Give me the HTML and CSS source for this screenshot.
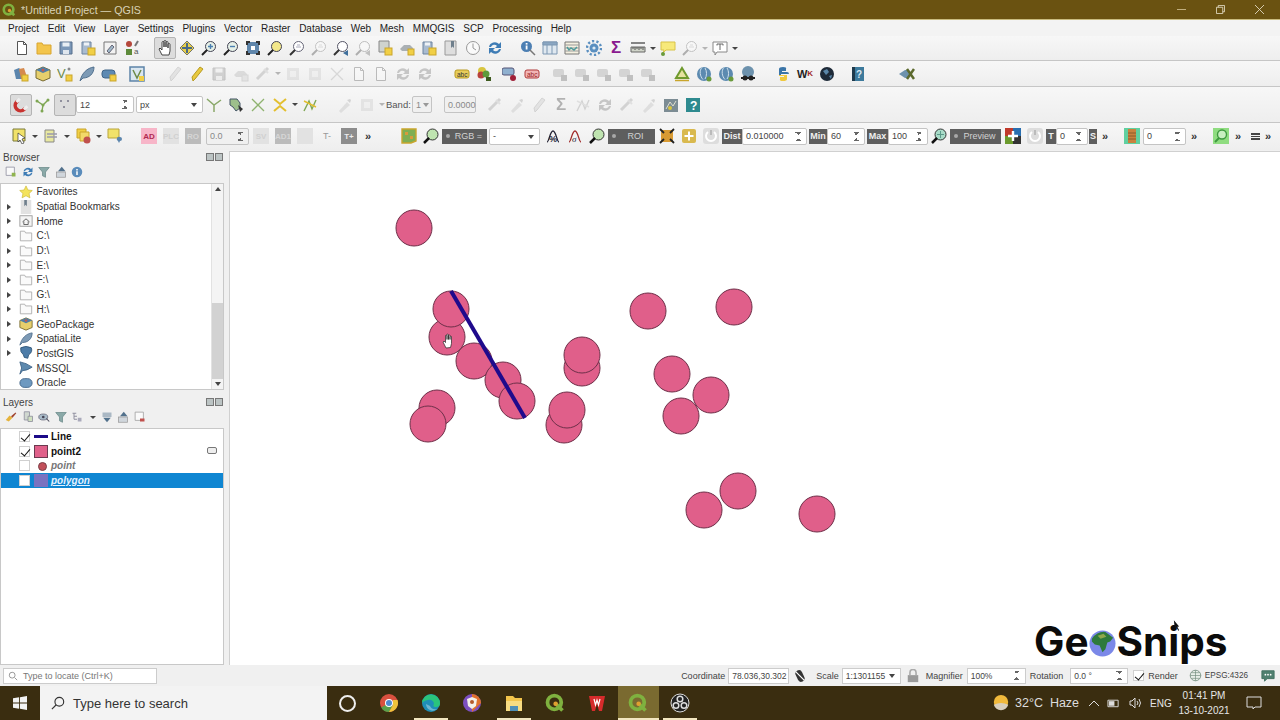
FILE: index.html
```html
<!DOCTYPE html>
<html lang="en">
<head>
    <meta charset="UTF-8">
    <title>*Untitled Project — QGIS</title>
    <link rel="stylesheet" href="styles.css">
</head>
<body>
    <svg class="defs" xmlns="http://www.w3.org/2000/svg">
        <symbol id="qgis" viewBox="0 0 16 16"><circle cx="7.500" cy="7.500" r="5.500" fill="none" stroke="#7fb13f" stroke-width="3"/><path d="M8 8l6 6" stroke="#7fb13f" stroke-width="3"/><circle cx="8.500" cy="8.500" r="1.800" fill="#e0a030"/></symbol>
        <symbol id="doc" viewBox="0 0 16 16"><path d="M3.500 1.500h6l3 3v10h-9z" fill="#fff" stroke="#555"/><path d="M9.500 1.500v3h3" fill="none" stroke="#555"/></symbol>
        <symbol id="folder" viewBox="0 0 16 16"><path d="M1 3h5l1 2h8v9H1z" fill="#f3c54c" stroke="#d9a52e"/></symbol>
        <symbol id="save" viewBox="0 0 16 16"><path d="M2 2h12v12H2z" fill="#7b97b8" stroke="#566f8c"/><path d="M4.500 2.500h7v4h-7z" fill="#e8eef4"/><path d="M5 10h6v4H5z" fill="#dfe6ee"/></symbol>
        <symbol id="saveas" viewBox="0 0 16 16"><path d="M2 2h9v12H2z" fill="#a9bbd0" stroke="#6c84a0"/><path d="M4 2.500h5v3H4z" fill="#eef2f6"/><rect x="8" y="8" width="7" height="7" fill="#f1cf45" stroke="#c9a52c"/></symbol>
        <symbol id="layout" viewBox="0 0 16 16"><path d="M2 2h12v12H2z" fill="#f2f2f2" stroke="#777"/><path d="M5 11l5-6 2 2-5 6z" fill="#9fb8c8" stroke="#667"/></symbol>
        <symbol id="hand" viewBox="0 0 16 16"><path d="M5 15l-3-6 1-1 2 2V2.500a1 1 0 0 1 2 0V7V1.500a1 1 0 0 1 2 0V7V2.500a1 1 0 0 1 2 0V8V4.500a1 1 0 0 1 2 0V11l-1 4z" fill="#fff" stroke="#333" stroke-width=".9"/></symbol>
        <symbol id="pansel" viewBox="0 0 16 16"><path d="M8 1l7 7-7 7-7-7z" fill="#e9d04a" stroke="#776"/><path d="M8 3v10M3 8h10" stroke="#4a6a86" stroke-width="2"/></symbol>
        <symbol id="zin" viewBox="0 0 16 16"><circle cx="9.500" cy="6.500" r="5" fill="#e6f0e8" stroke="#445"/><path d="M1 15l5-5" stroke="#222" stroke-width="2"/><path d="M9.500 4v5M7 6.500h5" stroke="#4a7fb0" stroke-width="1.400"/></symbol>
        <symbol id="zout" viewBox="0 0 16 16"><circle cx="9.500" cy="6.500" r="5" fill="#e6f0e8" stroke="#445"/><path d="M1 15l5-5" stroke="#222" stroke-width="2"/><path d="M7 6.500h5" stroke="#4a7fb0" stroke-width="1.400"/></symbol>
        <symbol id="zfull" viewBox="0 0 16 16"><path d="M2 2h12v12H2z" fill="#5f86ab"/><path d="M6 6h4v4H6z" fill="#fff"/><path d="M1 1h4v2H3v2H1zM15 1h-4v2h2v2h2zM1 15h4v-2H3v-2H1zM15 15h-4v-2h2v-2h2z" fill="#333"/></symbol>
        <symbol id="zsel" viewBox="0 0 16 16"><circle cx="9.500" cy="6.500" r="5" fill="#f3e88a" stroke="#445"/><path d="M1 15l5-5" stroke="#222" stroke-width="2"/></symbol>
        <symbol id="zlayer" viewBox="0 0 16 16"><circle cx="9.500" cy="6.500" r="5" fill="#fff" stroke="#667"/><path d="M1 15l5-5" stroke="#333" stroke-width="2"/><path d="M7 7h5M8 5h3" stroke="#aab"/></symbol>
        <symbol id="zlast" viewBox="0 0 16 16"><circle cx="9.500" cy="6.500" r="5" fill="#fff" stroke="#556"/><path d="M1 15l5-5" stroke="#333" stroke-width="2"/><path d="M15 10l-5 3 5 3z" fill="#3f6f9c"/></symbol>
        <symbol id="newmap" viewBox="0 0 16 16"><path d="M2 1h10v11H2z" fill="#cfd3cf" stroke="#888"/><rect x="8" y="8" width="7" height="7" fill="#f1cf45" stroke="#c9a52c"/></symbol>
        <symbol id="cloud" viewBox="0 0 16 16"><path d="M1 9l4-4h6l3 3v3H3z" fill="#aab0b4"/><rect x="9" y="9" width="6" height="6" fill="#f1cf45" stroke="#c9a52c"/></symbol>
        <symbol id="bookmark" viewBox="0 0 16 16"><path d="M2 1h11v14H2z" fill="#dedede" stroke="#999"/><path d="M8 1h3v7L9.500 6.500 8 8z" fill="#6f7f8c"/></symbol>
        <symbol id="clock" viewBox="0 0 16 16"><circle cx="8" cy="8" r="6.500" fill="#fafafa" stroke="#999"/><path d="M8 3.500V8l3 2" fill="none" stroke="#999"/></symbol>
        <symbol id="refresh" viewBox="0 0 16 16"><path d="M2 7a6 6 0 0 1 10-3l2-2v6H8l2-2a3.500 3.500 0 0 0-6 1zM14 9a6 6 0 0 1-10 3l-2 2V8h6l-2 2a3.500 3.500 0 0 0 6-1z" fill="#3e7cb5"/></symbol>
        <symbol id="info" viewBox="0 0 16 16"><circle cx="6.500" cy="6.500" r="5.500" fill="#4c7fb3"/><rect x="5.700" y="5.500" width="1.800" height="4" fill="#fff"/><rect x="5.700" y="3" width="1.800" height="1.600" fill="#fff"/><path d="M10 10l5 5" stroke="#777" stroke-width="1.500"/></symbol>
        <symbol id="infob" viewBox="0 0 16 16"><circle cx="8" cy="8" r="7" fill="#5a8cbb"/><rect x="7" y="7" width="2" height="5" fill="#fff"/><rect x="7" y="4" width="2" height="2" fill="#fff"/></symbol>
        <symbol id="table" viewBox="0 0 16 16"><path d="M1 2h14v12H1z" fill="#dfe8f0" stroke="#7d97b2"/><path d="M1 2h14v3H1zM5 5v9M10 5v9" fill="#8aa6c2" stroke="#7d97b2"/></symbol>
        <symbol id="calc" viewBox="0 0 16 16"><path d="M1 2h14v12H1z" fill="#f4f0e0" stroke="#777"/><path d="M1 5h14M1 8h14M1 11h14" stroke="#999"/><path d="M3 7l2 3 2-2 3 2 3-3" fill="none" stroke="#4d9a9a" stroke-width="1.400"/></symbol>
        <symbol id="gear" viewBox="0 0 16 16"><circle cx="8" cy="8" r="4.500" fill="#5a8fc0"/><circle cx="8" cy="8" r="7" fill="none" stroke="#5a8fc0" stroke-width="2.400" stroke-dasharray="2.200 2.200"/><circle cx="8" cy="8" r="1.600" fill="#dcebf5"/></symbol>
        <symbol id="ruler" viewBox="0 0 16 16"><path d="M1 3h14" stroke="#555" stroke-width="1.400"/><path d="M1 7h14v5H1z" fill="#cfd3c8" stroke="#666"/><path d="M3 7v2M5 7v3M7 7v2M9 7v3M11 7v2M13 7v3" stroke="#555"/></symbol>
        <symbol id="bubble" viewBox="0 0 16 16"><path d="M1 2h14v8H6l-3 3 1-3H1z" fill="#f7e97a" stroke="#d8c348"/><circle cx="3" cy="14" r="2" fill="#6a9a3c"/></symbol>
        <symbol id="textt" viewBox="0 0 16 16"><path d="M1 2h14v10H5l-2 3v-3H1z" fill="#fff" stroke="#888"/><path d="M5 4h6v1.500M5 4v1.500M8 4v6" fill="none" stroke="#666"/></symbol>
        <symbol id="stack" viewBox="0 0 16 16"><path d="M1 4l5-2 3 3v8H3z" fill="#5b85ad"/><path d="M6 3l5-1 3 9-6 2z" fill="#d58a4e"/><rect x="9" y="9" width="6" height="6" fill="#f1cf45" stroke="#c9a52c"/></symbol>
        <symbol id="gpkg" viewBox="0 0 16 16"><path d="M8 1l7 3v8l-7 3-7-3V4z" fill="#e6cf6c" stroke="#776a30"/><path d="M8 1l7 3-7 3-7-3z" fill="#4e7ea8"/><circle cx="8" cy="4" r="1.500" fill="#c05b4e"/></symbol>
        <symbol id="feather" viewBox="0 0 16 16"><path d="M1 15C3 7 8 2 15 1c0 7-5 11-11 11z" fill="#7d9ab5" stroke="#51708e"/></symbol>
        <symbol id="tmp" viewBox="0 0 16 16"><rect x="1" y="4" width="13" height="8" rx="3" fill="#5e8ab3" stroke="#3f6488"/><rect x="9" y="9" width="6" height="6" fill="#f1cf45" stroke="#c9a52c"/></symbol>
        <symbol id="vmesh" viewBox="0 0 16 16"><path d="M1 1h14v14H1z" fill="#dbe7f0" stroke="#5d84a8" stroke-width="1.500"/><path d="M4 4l4 8 4-8" fill="none" stroke="#6d8a4a" stroke-width="1.500"/><rect x="10" y="10" width="5" height="5" fill="#f1cf45"/></symbol>
        <symbol id="pencil" viewBox="0 0 16 16"><path d="M4 15l-1-4 8-10 3 2-8 10z" fill="#e8c93f" stroke="#b89b22"/></symbol>
        <symbol id="greyblock" viewBox="0 0 16 16"><path d="M2 2h12v12H2z" fill="#c8c8c8"/><path d="M5 5h6v6H5z" fill="#e8e8e8"/></symbol>
        <symbol id="greyline" viewBox="0 0 16 16"><path d="M2 13L13 2" stroke="#999" stroke-width="3"/><path d="M9 3l4 4" stroke="#bbb" stroke-width="2"/></symbol>
        <symbol id="abcg" viewBox="0 0 16 16"><rect x="1" y="3" width="11" height="8" rx="2" fill="#d4d4d4"/><rect x="9" y="9" width="6" height="6" fill="#c0c0c0"/></symbol>
        <symbol id="dots" viewBox="0 0 16 16"><circle cx="6" cy="5" r="4" fill="#d8c53f"/><circle cx="5" cy="9" r="3.500" fill="#b8433c"/><circle cx="10" cy="8" r="3.500" fill="#5f9a3a"/><rect x="10" y="11" width="5" height="4" fill="#3d5a1e"/></symbol>
        <symbol id="abpin" viewBox="0 0 16 16"><rect x="0" y="2" width="12" height="7" rx="2" fill="#8fb0cf" stroke="#557"/><circle cx="11" cy="12" r="3" fill="#a02038"/></symbol>
        <symbol id="tri" viewBox="0 0 16 16"><path d="M8 2l6 10H2z" fill="#e6e2a0" stroke="#6f9a2e" stroke-width="2"/><path d="M1 14.500h14" stroke="#c9a52c" stroke-width="1.500"/></symbol>
        <symbol id="globe" viewBox="0 0 16 16"><circle cx="8" cy="8" r="7" fill="#5c8ab0"/><path d="M6 1.500c-3 3-2 9 1 12M9 2c2 3 2 8 0 11" fill="none" stroke="#cfe0ec"/><circle cx="13" cy="13" r="2.500" fill="#6a9a3c"/></symbol>
        <symbol id="spy" viewBox="0 0 16 16"><circle cx="8" cy="6" r="6" fill="#6d92ad"/><path d="M1 11h14v2H1z" fill="#222"/><circle cx="5" cy="12" r="2.500" fill="#222"/><circle cx="11" cy="12" r="2.500" fill="#222"/></symbol>
        <symbol id="python" viewBox="0 0 16 16"><path d="M4 7V3q0-2 4-2t3 2v2H7v1h5q2 0 2 2H6v1H4z" fill="#3b75a8"/><path d="M12 9v4q0 2-4 2t-3-2v-2h4v-1H4V9h8z" fill="#f0c93e"/></symbol>
        <symbol id="earth" viewBox="0 0 16 16"><circle cx="8" cy="8" r="7" fill="#1e2a38"/><path d="M4 5l4-2 2 3-3 3zM10 10l3-1-1 4z" fill="#5a86a8"/></symbol>
        <symbol id="fish" viewBox="0 0 16 16"><path d="M0 8l6-4h4v8H6z" fill="#6d92ad"/><path d="M8 3l7 10M15 3L8 13" stroke="#5c6a2e" stroke-width="2.500"/></symbol>
        <symbol id="magnet" viewBox="0 0 16 16"><path d="M4.500 4L3.800 4.700A5 5 0 0 0 11.300 12.200L12 11.500" fill="none" stroke="#c8322f" stroke-width="3.600"/><path d="M6.800 1.700L3.500 5M14.300 9.200L11 12.500" stroke="#eee" stroke-width="3"/></symbol>
        <symbol id="vtx" viewBox="0 0 16 16"><path d="M2 4l6 4 5-5M8 8l-1 6" fill="none" stroke="#7ea653" stroke-width="1.400"/><circle cx="2" cy="4" r="1.500" fill="#7ea653"/><circle cx="8" cy="8" r="1.500" fill="#7ea653"/><circle cx="13" cy="3" r="1.500" fill="#7ea653"/><circle cx="7" cy="14" r="1.500" fill="#7ea653"/></symbol>
        <symbol id="vdots" viewBox="0 0 16 16"><circle cx="4" cy="4" r="1" fill="#778"/><circle cx="11" cy="4" r="1" fill="#778"/><circle cx="7" cy="10" r="1" fill="#778"/></symbol>
        <symbol id="yline" viewBox="0 0 16 16"><path d="M1 2l7 6 7-5M8 8v7" fill="none" stroke="#8aa86a" stroke-width="1.500"/></symbol>
        <symbol id="topo" viewBox="0 0 16 16"><path d="M2 2h7l3 4v5l-4 3-3-4-3-2z" fill="#9dbf8b" stroke="#456"/><path d="M10 8l5 4-3 3z" fill="#333"/></symbol>
        <symbol id="xline" viewBox="0 0 16 16"><path d="M2 2l12 12M14 2L2 14" stroke="#8fb370" stroke-width="1.300"/></symbol>
        <symbol id="xyel" viewBox="0 0 16 16"><path d="M2 2l6 5 6-5M2 14l6-5 6 5" fill="none" stroke="#e3bf2f" stroke-width="2"/></symbol>
        <symbol id="trace" viewBox="0 0 16 16"><path d="M2 14l5-10 3 8 4-9" fill="none" stroke="#7ea653" stroke-width="1.400"/><path d="M2 4l12 6" stroke="#e3bf2f" stroke-width="1.500"/></symbol>
        <symbol id="dropper" viewBox="0 0 16 16"><path d="M2 14l8-9 3 3-9 8z" fill="#bbb"/><path d="M10 3l3-1 1 1-1 3z" fill="#999"/></symbol>
        <symbol id="mapgrey" viewBox="0 0 16 16"><path d="M1 2h14v13H1z" fill="#7c8c94"/><path d="M3 12l4-7 3 4 3-5" stroke="#e0e0d0" fill="none"/><circle cx="7" cy="11" r="2" fill="#d8c53f"/></symbol>
        <symbol id="selrect" viewBox="0 0 16 16"><path d="M1 1h12v12H1z" fill="#f1e26a" stroke="#7a7a3a"/><path d="M6 5l7 5-3 1 2 4-2 1-2-4-2 2z" fill="#fff" stroke="#333" stroke-width=".7"/></symbol>
        <symbol id="selform" viewBox="0 0 16 16"><path d="M1 2h9v12H1z" fill="#e8e8a0" stroke="#888"/><path d="M3 6h10M3 9h10" stroke="#99a" stroke-width="1.400"/></symbol>
        <symbol id="desel" viewBox="0 0 16 16"><path d="M1 1h9v9H1z" fill="#f1cf45" stroke="#c9a52c"/><path d="M4 4h9v9H4z" fill="#f3d96a" stroke="#c9a52c"/><circle cx="11" cy="12" r="3.500" fill="#c0504d"/></symbol>
        <symbol id="selloc" viewBox="0 0 16 16"><path d="M1 1h11v9H1z" fill="#f1e26a" stroke="#b9a53a"/><path d="M13 9a2 2 0 0 1 0 4l-1 2-1-2a2 2 0 0 1 2-4z" fill="#5b85ad"/></symbol>
        <symbol id="scpmap" viewBox="0 0 16 16"><path d="M1 1h14v12l-5 2H1z" fill="#7fae52" stroke="#c9a52c" stroke-width="1.400"/><path d="M4 4h3v3H4zM9 8h3v3H9z" fill="#d79a3c"/></symbol>
        <symbol id="lensp" viewBox="0 0 16 16"><circle cx="9.500" cy="6.500" r="5.500" fill="#bfe4b0" stroke="#333"/><path d="M1 15l5-5" stroke="#111" stroke-width="2.500"/></symbol>
        <symbol id="lensblue" viewBox="0 0 16 16"><circle cx="9.500" cy="6.500" r="5.500" fill="#a8dcc8" stroke="#333"/><path d="M1 15l5-5" stroke="#111" stroke-width="2.500"/><path d="M9.500 3v7M6 6.500h7" stroke="#5b9a8a"/></symbol>
        <symbol id="roi" viewBox="0 0 16 16"><path d="M2 2h12v12H2z" fill="#d89a32"/><path d="M1 1l4 4M15 1l-4 4M1 15l4-4M15 15l-4-4" stroke="#222" stroke-width="1.800"/></symbol>
        <symbol id="plusy" viewBox="0 0 16 16"><rect x="1" y="1" width="14" height="14" rx="2" fill="#d9b94e"/><path d="M8 3.500v9M3.500 8h9" stroke="#fff" stroke-width="2"/></symbol>
        <symbol id="reload" viewBox="0 0 16 16"><rect x="0" y="0" width="16" height="16" rx="3" fill="#ddd"/><path d="M5 4a5 5 0 1 0 6 0" fill="none" stroke="#fff" stroke-width="2"/><path d="M8 2v5" stroke="#bbb" stroke-width="2"/></symbol>
        <symbol id="plusc" viewBox="0 0 16 16"><path d="M0 0h8v8H0z" fill="#c0392b"/><path d="M8 0h8v8H8z" fill="#2a6fb0"/><path d="M0 8h8v8H0z" fill="#6a9a2c"/><path d="M8 8h8v8H8z" fill="#333"/><path d="M8 3v10M3 8h10" stroke="#fff" stroke-width="2.400"/></symbol>
        <symbol id="band" viewBox="0 0 16 16"><rect x="0" y="0" width="16" height="16" fill="#5fd0a0"/><rect x="4" y="1" width="8" height="14" fill="#c9813e"/><path d="M4 5h8M4 8h8M4 11h8" stroke="#8a5c2a"/></symbol>
        <symbol id="lensg" viewBox="0 0 16 16"><rect x="0" y="0" width="16" height="16" fill="#8fdc80"/><circle cx="9" cy="6.500" r="4.500" fill="#c8efc0" stroke="#3f9a3f" stroke-width="1.400"/><path d="M2 14l4-4" stroke="#3f9a3f" stroke-width="2"/></symbol>
        <symbol id="star" viewBox="0 0 16 16"><path d="M8 1l2.200 4.700 5 .6-3.700 3.400 1 5L8 12.300 3.500 14.700l1-5L.8 6.300l5-.6z" fill="#f4e35c" stroke="#c9b52c" stroke-width=".7"/></symbol>
        <symbol id="bm" viewBox="0 0 16 16"><path d="M2 0h12v16H2z" fill="#e2e2e2"/><path d="M6 0h3v7L7.500 5.500 6 7z" fill="#6f7f8c"/></symbol>
        <symbol id="home" viewBox="0 0 16 16"><rect x="1" y="2" width="14" height="12" fill="#f4f4f4" stroke="#999"/><path d="M4 9l4-3.500L12 9M5.500 8.500V12h5V8.500" fill="none" stroke="#555"/></symbol>
        <symbol id="dir" viewBox="0 0 16 16"><path d="M1.500 2.500h5l1 2h7v9h-13z" fill="#fafafa" stroke="#aaa"/></symbol>
        <symbol id="pg" viewBox="0 0 16 16"><path d="M2 2q6-3 12 0 2 5-3 8l-1 4-4-1-1-3Q1 7 2 2z" fill="#4d7ca8" stroke="#2f5678"/></symbol>
        <symbol id="ms" viewBox="0 0 16 16"><path d="M1 1q7 1 14 6-6 4-11 4l-3 4 2-7z" fill="#5d89ae" stroke="#3f6488"/></symbol>
        <symbol id="ora" viewBox="0 0 16 16"><rect x="1" y="3" width="14" height="10" rx="5" fill="#6e99c0" stroke="#3f6488"/></symbol>
        <symbol id="paint" viewBox="0 0 16 16"><path d="M1 12l5-6 4 3-5 5z" fill="#e5b33c"/><path d="M8 7l6-5 1 1-5 6z" fill="#a0432e"/></symbol>
        <symbol id="addg" viewBox="0 0 16 16"><path d="M3 1h7v11H3z" fill="#d0d8d0" stroke="#889"/><path d="M8 7h6v7H8z" fill="#cfe0bf" stroke="#889"/></symbol>
        <symbol id="eye" viewBox="0 0 16 16"><ellipse cx="7" cy="8" rx="6" ry="4" fill="#a8bac8" stroke="#667"/><circle cx="7" cy="8" r="1.800" fill="#445"/><path d="M11 10l4 4" stroke="#445" stroke-width="1.400"/></symbol>
        <symbol id="filter" viewBox="0 0 16 16"><path d="M1 2h14L10 8v7l-4-2V8z" fill="#8aa9a8" stroke="#6b8a8a"/></symbol>
        <symbol id="ticks" viewBox="0 0 16 16"><path d="M2 3h5M4 3v8M4 7h4M4 11h4" fill="none" stroke="#889" stroke-width="1.200"/><rect x="9" y="9" width="5" height="5" fill="#aab"/></symbol>
        <symbol id="down" viewBox="0 0 16 16"><rect x="2" y="2" width="12" height="6" fill="#aab8c4"/><path d="M8 15l-5-6h10z" fill="#52718c"/></symbol>
        <symbol id="up" viewBox="0 0 16 16"><rect x="2" y="8" width="12" height="7" fill="#d0d6dc" stroke="#999"/><path d="M9 1l5 6H4z" fill="#52718c"/></symbol>
        <symbol id="rmv" viewBox="0 0 16 16"><path d="M1.500 1.500h11v11h-11z" fill="#fafafa" stroke="#999"/><rect x="8" y="10" width="6" height="4" fill="#c0504d"/></symbol>
        <symbol id="addb" viewBox="0 0 16 16"><path d="M1.500 1.500h11v11h-11z" fill="#fafafa" stroke="#889"/><rect x="9" y="9" width="5" height="5" fill="#8fb44f"/></symbol>
        <symbol id="mouse" viewBox="0 0 16 16"><rect x="4" y="1" width="8" height="14" rx="4" fill="#333" transform="rotate(-25 8 8)"/><path d="M3 3l10 10" stroke="#fff" stroke-width="1.500"/></symbol>
        <symbol id="lock" viewBox="0 0 16 16"><rect x="2" y="7" width="12" height="8" fill="#9a9a9a"/><path d="M4.500 7V4a3.500 3.500 0 0 1 7 0v3" fill="none" stroke="#aaa" stroke-width="1.800"/></symbol>
        <symbol id="web" viewBox="0 0 16 16"><circle cx="8" cy="8" r="6.500" fill="#e8efe8" stroke="#6f8a7a"/><path d="M1.500 8h13M8 1.500v13M3 4.500h10M3 11.500h10" stroke="#6f8a7a" stroke-width=".8"/></symbol>
        <symbol id="msg" viewBox="0 0 16 16"><path d="M1 2h14v9H7l-3 3v-3H1z" fill="#4f7f6f" stroke="#3f6f5f"/><circle cx="5" cy="6.500" r="1" fill="#fff"/><circle cx="8" cy="6.500" r="1" fill="#fff"/><circle cx="11" cy="6.500" r="1" fill="#fff"/></symbol>
        <symbol id="chrome" viewBox="0 0 20 20"><circle cx="10" cy="10" r="9" fill="#d9503f"/><path d="M10 10L2.200 14.500A9 9 0 0 0 10 19l4-7z" fill="#5aa04a"/><path d="M14 7h4.500A9 9 0 0 1 10 19l4-7z" fill="#efc23c"/><circle cx="10" cy="10" r="4" fill="#fff"/><circle cx="10" cy="10" r="3" fill="#4f8ad0"/></symbol>
        <symbol id="edge" viewBox="0 0 20 20"><circle cx="10" cy="10" r="9" fill="#1f8fb8"/><path d="M1 10a9 9 0 0 1 18 1c0 2-2 3-4 3-3 0-3-2-2-3 0-3-3-5-6-4-3 0-6 3-6 3z" fill="#2ac47c"/><path d="M5 11c0 5 6 9 11 5-4 1-6-1-7-3z" fill="#fff" opacity=".35"/></symbol>
        <symbol id="brave" viewBox="0 0 20 20"><circle cx="10" cy="10" r="9" fill="#7c4fc0"/><path d="M10 1a9 9 0 0 1 9 9l-9 9z" fill="#e0712c"/><path d="M10 4l5 2-1 7-4 3-4-3-1-7z" fill="#f4f0e8"/><circle cx="10" cy="9" r="2" fill="#b55a2c"/></symbol>
        <symbol id="files" viewBox="0 0 20 20"><path d="M2 3h7l2 2h7v13H2z" fill="#f3c54c"/><path d="M2 8h16v10H2z" fill="#f7dc82"/><rect x="6" y="13" width="8" height="5" fill="#4f8fb8"/></symbol>
        <symbol id="wps" viewBox="0 0 20 20"><path d="M2 3h16l-3 15h-3l-2-7-2 7H5z" fill="#d62b2b"/><path d="M7 6l1.500 6L10 7l1.500 5L13 6" fill="none" stroke="#fff" stroke-width="1.200"/></symbol>
        <symbol id="obs" viewBox="0 0 20 20"><circle cx="10" cy="10" r="9" fill="#222" stroke="#ddd"/><circle cx="10" cy="6" r="2.800" fill="none" stroke="#ddd" stroke-width="1.500"/><circle cx="6" cy="12.500" r="2.800" fill="none" stroke="#ddd" stroke-width="1.500"/><circle cx="14" cy="12.500" r="2.800" fill="none" stroke="#ddd" stroke-width="1.500"/></symbol>
        <symbol id="sun" viewBox="0 0 20 20"><circle cx="10" cy="9" r="8" fill="#f0b93c"/><path d="M2 12q8-4 16 0-2 6-8 6t-8-6z" fill="#d8cfbf"/></symbol>
        <symbol id="earthlogo" viewBox="0 0 28 28"><circle cx="14" cy="14" r="13.500" fill="#7b88e8"/><path d="M3 9q6-8 14-7l8 6-3 4-3 1-2 7-3 3-3-7-5-1-3-3z" fill="#2e7a3c"/><path d="M9 6l6-2 3 3-6 2z" fill="#8fa84c"/></symbol>
    </svg>

    <div class="titlebar">
        <svg class="ti-logo"><use href="#qgis"/></svg>
        <span class="ti-text">*Untitled Project — QGIS</span>
        <div class="winbtns">
            <span class="wb">
                <svg viewBox="0 0 10 10"><path d="M0 5h10" stroke="#c9b98a"/></svg>
            </span>
            <span class="wb">
                <svg viewBox="0 0 10 10"><path d="M.5 2.500h7v7h-7zM2.500 2.500v-2h7v7h-2" fill="none" stroke="#e0d8c0"/></svg>
            </span>
            <span class="wb">
                <svg viewBox="0 0 10 10"><path d="M0 0l10 10M10 0L0 10" stroke="#e0d8c0"/></svg>
            </span>
        </div>
    </div>

    <div class="menubar">
        <span>Project</span><span>Edit</span><span>View</span><span>Layer</span><span>Settings</span><span>Plugins</span><span>Vector</span><span>Raster</span><span>Database</span><span>Web</span><span>Mesh</span><span>MMQGIS</span><span>SCP</span><span>Processing</span><span>Help</span>
    </div>

    <div class="tbar r1">
        <i class="b"><svg><use href="#doc"/></svg></i><i class="b"><svg><use href="#folder"/></svg></i><i class="b"><svg><use href="#save"/></svg></i><i class="b"><svg><use href="#saveas"/></svg></i><i class="b"><svg><use href="#layout"/></svg></i>
        <i class="b"><svg viewBox="0 0 16 16"><circle cx="5" cy="4" r="3" fill="#b5483c"/><path d="M2 9h6v6H2z" fill="#5d8a3a"/><path d="M14 1l-3 5" stroke="#777" stroke-width="2"/><text x="10" y="14" font-size="8" font-family="Liberation Sans" fill="#555">a</text></svg></i>
        <u class="s11"></u>
        <i class="b on"><svg><use href="#hand"/></svg></i><i class="b"><svg><use href="#pansel"/></svg></i><i class="b"><svg><use href="#zin"/></svg></i><i class="b"><svg><use href="#zout"/></svg></i><i class="b"><svg><use href="#zfull"/></svg></i><i class="b"><svg><use href="#zsel"/></svg></i><i class="b"><svg><use href="#zlayer"/></svg></i><i class="b dis"><svg><use href="#zlayer"/></svg></i><i class="b"><svg><use href="#zlast"/></svg></i><i class="b dis"><svg><use href="#zlast"/></svg></i><i class="b"><svg><use href="#newmap"/></svg></i><i class="b"><svg><use href="#cloud"/></svg></i><i class="b"><svg><use href="#saveas"/></svg></i><i class="b"><svg><use href="#bookmark"/></svg></i><i class="b"><svg><use href="#clock"/></svg></i><i class="b"><svg><use href="#refresh"/></svg></i>
        <u class="s11"></u>
        <i class="b"><svg><use href="#info"/></svg></i><i class="b"><svg><use href="#table"/></svg></i><i class="b"><svg><use href="#calc"/></svg></i><i class="b"><svg><use href="#gear"/></svg></i><i class="b sigma">Σ</i><i class="b"><svg><use href="#ruler"/></svg></i><i class="dd"></i><i class="b"><svg><use href="#bubble"/></svg></i><i class="b dis"><svg><use href="#zlayer"/></svg></i><i class="dd dis"></i><i class="b"><svg><use href="#textt"/></svg></i><i class="dd"></i>
    </div>

    <div class="tbar r2">
        <i class="b"><svg><use href="#stack"/></svg></i><i class="b"><svg><use href="#gpkg"/></svg></i>
        <i class="b"><svg viewBox="0 0 16 16"><text x="0" y="12" font-size="13" font-family="Liberation Sans" fill="#6d8a4a">V</text><circle cx="12" cy="3" r="1.500" fill="#888"/><rect x="9" y="9" width="6" height="6" fill="#f1cf45" stroke="#c9a52c"/></svg></i>
        <i class="b"><svg><use href="#feather"/></svg></i><i class="b"><svg><use href="#tmp"/></svg></i>
        <u class="s6"></u>
        <i class="b"><svg><use href="#vmesh"/></svg></i>
        <u class="s16"></u>
        <i class="b dis"><svg><use href="#pencil"/></svg></i><i class="b"><svg><use href="#pencil"/></svg></i><i class="b dis"><svg><use href="#save"/></svg></i><i class="b dis"><svg><use href="#cloud"/></svg></i><i class="b dis"><svg><use href="#greyline"/></svg></i><i class="dd dis"></i><i class="b dis"><svg><use href="#greyblock"/></svg></i><i class="b dis"><svg><use href="#greyblock"/></svg></i><i class="b dis"><svg><use href="#xline"/></svg></i><i class="b dis"><svg><use href="#doc"/></svg></i><i class="b dis"><svg><use href="#doc"/></svg></i><i class="b dis"><svg><use href="#refresh"/></svg></i><i class="b dis"><svg><use href="#refresh"/></svg></i>
        <u class="s15"></u>
        <i class="b"><svg viewBox="0 0 16 16"><rect x="1" y="4" width="14" height="8" rx="2" fill="#e8cd5a" stroke="#b89b22"/><text x="3" y="10.500" font-size="6.500" font-family="Liberation Sans" fill="#333">abc</text></svg></i>
        <i class="b"><svg><use href="#dots"/></svg></i>
        <u class="s4"></u>
        <i class="b"><svg><use href="#abpin"/></svg></i>
        <i class="b"><svg viewBox="0 0 16 16"><rect x="1" y="4" width="14" height="8" rx="2" fill="#f2b6b6" stroke="#b03a3a"/><text x="3" y="10.500" font-size="6.500" font-family="Liberation Sans" fill="#922">abc</text></svg></i>
        <u class="s6"></u>
        <i class="b"><svg><use href="#abcg"/></svg></i><i class="b"><svg><use href="#abcg"/></svg></i><i class="b"><svg><use href="#abcg"/></svg></i><i class="b"><svg><use href="#abcg"/></svg></i><i class="b"><svg><use href="#abcg"/></svg></i>
        <u class="s12"></u>
        <i class="b"><svg><use href="#tri"/></svg></i><i class="b"><svg><use href="#globe"/></svg></i><i class="b"><svg><use href="#globe"/></svg></i><i class="b"><svg><use href="#spy"/></svg></i>
        <u class="s13"></u>
        <i class="b"><svg><use href="#python"/></svg></i><i class="b wkt">W<sub>K</sub></i><i class="b"><svg><use href="#earth"/></svg></i>
        <u class="s9"></u>
        <i class="b"><svg viewBox="0 0 16 16"><rect x="2" y="1" width="12" height="14" fill="#3d7a9c"/><rect x="2" y="1" width="3" height="14" fill="#1f3a4c"/><text x="6" y="12" font-size="10" font-weight="700" font-family="Liberation Sans" fill="#dbe8f2">?</text></svg></i>
        <u class="s27"></u>
        <i class="b"><svg><use href="#fish"/></svg></i>
    </div>

    <div class="tbar r3">
        <i class="b on"><svg><use href="#magnet"/></svg></i><i class="b"><svg><use href="#vtx"/></svg></i><i class="b on"><svg><use href="#vdots"/></svg></i>
        <span class="field w58 mr2">12<em class="spin"></em></span>
        <span class="field w67">px<em class="arrow"></em></span>
        <i class="b"><svg><use href="#yline"/></svg></i><i class="b"><svg><use href="#topo"/></svg></i><i class="b"><svg><use href="#xline"/></svg></i><i class="b"><svg><use href="#xyel"/></svg></i><i class="dd"></i><i class="b"><svg><use href="#trace"/></svg></i>
        <u class="s13"></u>
        <i class="b dis"><svg><use href="#dropper"/></svg></i><i class="b dis"><svg><use href="#greyblock"/></svg></i><i class="dd dis"></i>
        <span class="lbl w26">Band:</span>
        <span class="field w20 off">1<em class="arrow small"></em></span>
        <u class="s12"></u>
        <span class="field w32 off">0.0000</span>
        <u class="s8"></u>
        <i class="b dis"><svg><use href="#greyline"/></svg></i><i class="b dis"><svg><use href="#dropper"/></svg></i><i class="b dis"><svg><use href="#pencil"/></svg></i><i class="b dis sigma">Σ</i><i class="b dis"><svg><use href="#trace"/></svg></i><i class="b dis"><svg><use href="#refresh"/></svg></i><i class="b dis"><svg><use href="#greyline"/></svg></i><i class="b dis"><svg><use href="#dropper"/></svg></i><i class="b"><svg><use href="#mapgrey"/></svg></i>
        <i class="b"><svg viewBox="0 0 16 16"><rect x="1" y="1" width="14" height="14" fill="#2e8a8f"/><text x="5" y="12.500" font-size="12" font-weight="700" font-family="Liberation Sans" fill="#fff">?</text></svg></i>
    </div>

    <div class="tbar r4">
        <i class="b"><svg><use href="#selrect"/></svg></i><i class="dd"></i><u class="s2"></u>
        <i class="b"><svg><use href="#selform"/></svg></i><i class="dd"></i><u class="s2"></u>
        <i class="b"><svg><use href="#desel"/></svg></i><i class="dd"></i><u class="s1"></u>
        <i class="b"><svg><use href="#selloc"/></svg></i>
        <u class="s12"></u>
        <i class="b"><b class="tag pink">AD</b></i><i class="b"><b class="tag pale">PLC</b></i><i class="b"><b class="tag mid">RO</b></i>
        <u class="s2"></u>
        <span class="field w43 off mr1">0.0<em class="spin"></em></span>
        <i class="b"><b class="tag pale">SV</b></i><i class="b"><b class="tag mid">AD1</b></i><i class="b"><b class="tag pale"></b></i><i class="b ttx">T-</i><i class="b"><b class="tag dark">T+</b></i>
        <i class="more"></i>
        <u class="s22"></u>
        <i class="b"><svg><use href="#scpmap"/></svg></i><i class="b"><svg><use href="#lensp"/></svg></i>
        <span class="chip w45"><s></s>RGB =</span>
        <u class="s2"></u>
        <span class="field w51">-<em class="arrow"></em></span>
        <u class="s2"></u>
        <i class="b"><svg viewBox="0 0 16 16"><path d="M2 14C4 14 5 3 8 3s4 11 6 11" fill="none" stroke="#223" stroke-width="1.300"/><text x="4" y="14" font-size="9" font-weight="700" font-family="Liberation Sans" fill="#223">%</text></svg></i>
        <i class="b"><svg viewBox="0 0 16 16"><path d="M2 14C4 14 5 3 8 3s4 11 6 11" fill="none" stroke="#a02a2a" stroke-width="1.300"/><text x="5" y="14" font-size="9" font-style="italic" font-family="Liberation Serif" fill="#223">σ</text></svg></i>
        <i class="b"><svg><use href="#lensp"/></svg></i>
        <span class="chip w47"><s></s>ROI</span>
        <u class="s1"></u>
        <i class="b"><svg><use href="#roi"/></svg></i><i class="b"><svg><use href="#plusy"/></svg></i><i class="b"><svg><use href="#reload"/></svg></i>
        <span class="tagw w20">Dist</span><span class="field w65 mr2">0.010000<em class="spin"></em></span>
        <span class="tagw w18">Min</span><span class="field w38 mr2">60<em class="spin"></em></span>
        <span class="tagw w21">Max</span><span class="field w40">100<em class="spin"></em></span>
        <i class="b"><svg><use href="#lensblue"/></svg></i>
        <span class="chip w51 mr1"><s></s>Preview</span>
        <i class="b"><svg><use href="#plusc"/></svg></i><i class="b"><svg><use href="#reload"/></svg></i>
        <span class="tagw w10">T</span><span class="field w32 mr1">0<em class="spin"></em></span>
        <span class="tagw w8">S</span><i class="more"></i>
        <u class="s8"></u>
        <i class="b"><svg><use href="#band"/></svg></i>
        <span class="field w43">0<em class="spin"></em></span>
        <i class="more"></i>
        <u class="s8"></u>
        <i class="b"><svg><use href="#lensg"/></svg></i>
        <i class="more narrow"></i>
        <u class="s7"></u>
        <i class="burger"></i><i class="more narrow"></i>
    </div>

    <div class="main">
        <div class="side">
            <div class="dock browser">
                <div class="dock-head">Browser<span class="dock-btns"><i></i><i></i></span></div>
                <div class="dock-tools">
                    <svg><use href="#addb"/></svg><svg><use href="#refresh"/></svg><svg><use href="#filter"/></svg><svg><use href="#up"/></svg><svg><use href="#infob"/></svg>
                </div>
                <div class="tree">
                    <div class="rows">
                        <div class="row"><a></a><svg><use href="#star"/></svg>Favorites</div>
                        <div class="row"><a class="tw"></a><svg><use href="#bm"/></svg>Spatial Bookmarks</div>
                        <div class="row"><a class="tw"></a><svg><use href="#home"/></svg>Home</div>
                        <div class="row"><a class="tw"></a><svg><use href="#dir"/></svg>C:\</div>
                        <div class="row"><a class="tw"></a><svg><use href="#dir"/></svg>D:\</div>
                        <div class="row"><a class="tw"></a><svg><use href="#dir"/></svg>E:\</div>
                        <div class="row"><a class="tw"></a><svg><use href="#dir"/></svg>F:\</div>
                        <div class="row"><a class="tw"></a><svg><use href="#dir"/></svg>G:\</div>
                        <div class="row"><a class="tw"></a><svg><use href="#dir"/></svg>H:\</div>
                        <div class="row"><a class="tw"></a><svg><use href="#gpkg"/></svg>GeoPackage</div>
                        <div class="row"><a class="tw"></a><svg><use href="#feather"/></svg>SpatiaLite</div>
                        <div class="row"><a class="tw"></a><svg><use href="#pg"/></svg>PostGIS</div>
                        <div class="row"><a></a><svg><use href="#ms"/></svg>MSSQL</div>
                        <div class="row"><a></a><svg><use href="#ora"/></svg>Oracle</div>
                    </div>
                    <div class="vscroll"><span class="up"></span><span class="thumb"></span><span class="down"></span></div>
                </div>
            </div>
            <div class="dock layers">
                <div class="dock-head">Layers<span class="dock-btns"><i></i><i></i></span></div>
                <div class="dock-tools">
                    <svg><use href="#paint"/></svg><svg><use href="#addg"/></svg><svg><use href="#eye"/></svg><svg><use href="#filter"/></svg><svg><use href="#ticks"/></svg><i class="dd"></i><svg><use href="#down"/></svg><svg><use href="#up"/></svg><svg><use href="#rmv"/></svg>
                </div>
                <div class="layer-tree">
                    <div class="lrow strong"><span class="ck on"></span><span class="sw line"></span>Line</div>
                    <div class="lrow strong"><span class="ck on"></span><span class="sw poly"></span>point2<span class="memo"></span></div>
                    <div class="lrow off"><span class="ck"></span><span class="sw dot"></span>point</div>
                    <div class="lrow sel"><span class="ck"></span><span class="sw purple"></span>polygon</div>
                </div>
            </div>
        </div>
        <div class="canvas">
            <svg class="map" viewBox="230 152 1050 513">
                <g class="pts">
                    <circle cx="414" cy="228" r="18"/>
                    <circle cx="447" cy="337" r="18"/>
                    <circle cx="451" cy="309" r="18"/>
                    <circle cx="474" cy="361" r="18"/>
                    <circle cx="503" cy="380" r="18"/>
                    <circle cx="517" cy="401" r="18"/>
                    <circle cx="582" cy="368" r="18"/>
                    <circle cx="582" cy="355" r="18"/>
                    <circle cx="564" cy="425" r="18"/>
                    <circle cx="567" cy="410" r="18"/>
                    <circle cx="437" cy="408" r="18"/>
                    <circle cx="428" cy="424" r="18"/>
                    <circle cx="648" cy="311" r="18"/>
                    <circle cx="734" cy="307" r="18"/>
                    <circle cx="672" cy="374" r="18"/>
                    <circle cx="711" cy="395" r="18"/>
                    <circle cx="681" cy="416" r="18"/>
                    <circle cx="738" cy="491" r="18"/>
                    <circle cx="704" cy="510" r="18"/>
                    <circle cx="817" cy="514" r="18"/>
                </g>
                <path class="ln" d="M451 291L525 418"/>
                <path class="cur" d="M446 348l-3-6 1-1 1.500 1.500v-7a1 1 0 0 1 1.500 0v4-5a1 1 0 0 1 1.500 0v5-4a1 1 0 0 1 1.500 0v4-3a1 1 0 0 1 1.500 0v7l-1 4z"/>
            </svg>
            <div class="logo">Ge<svg><use href="#earthlogo"/></svg>Snips</div>
            <svg class="logo-cursor" viewBox="0 0 8 12"><path d="M1 0l6 7-2 .5 2 4-1 .5-2-4-2 1.500z"/></svg>
        </div>
    </div>

    <div class="status">
        <span class="locate"><svg viewBox="0 0 12 12"><circle cx="5" cy="5" r="3.500" fill="none" stroke="#888"/><path d="M8 8l3 3" stroke="#888"/></svg>Type to locate (Ctrl+K)</span>
        <span class="st-right">
            <span class="st-lbl">Coordinate</span>
            <span class="sf w61">78.036,30.302</span>
            <svg class="st-ic m"><use href="#mouse"/></svg>
            <span class="st-lbl">Scale</span>
            <span class="sf w59">1:1301155<em class="arrow"></em></span>
            <svg class="st-ic l"><use href="#lock"/></svg>
            <span class="st-lbl mag">Magnifier</span>
            <span class="sf w59">100%<em class="spin"></em></span>
            <span class="st-lbl r">Rotation</span>
            <span class="sf w58">0.0 °<em class="spin"></em></span>
            <span class="ck on st-ck"></span>
            <span class="st-lbl">Render</span>
            <svg class="st-ic g"><use href="#web"/></svg>
            <span class="st-lbl crs">EPSG:4326</span>
            <svg class="st-ic c"><use href="#msg"/></svg>
        </span>
    </div>

    <div class="taskbar">
        <span class="start"><svg viewBox="0 0 16 16"><path d="M0 2.500l7-1v6H0zM8 1.300L16 0v7.500H8zM0 8.500h7v6l-7-1zM8 8.500h8V16l-8-1.300z" fill="#f2f2f2"/></svg></span>
        <span class="search"><svg viewBox="0 0 16 16"><circle cx="9.500" cy="6.500" r="5" fill="none" stroke="#333" stroke-width="1.300"/><path d="M6 10l-5 5" stroke="#333" stroke-width="1.300"/></svg>Type here to search</span>
        <span class="task-icons">
            <span class="tk cortana"></span>
            <span class="tk"><svg><use href="#chrome"/></svg></span>
            <span class="tk open"><svg><use href="#edge"/></svg></span>
            <span class="tk"><svg><use href="#brave"/></svg></span>
            <span class="tk open"><svg><use href="#files"/></svg></span>
            <span class="tk"><svg><use href="#qgis"/></svg></span>
            <span class="tk"><svg><use href="#wps"/></svg></span>
            <span class="tk active"><svg><use href="#qgis"/></svg></span>
            <span class="tk open"><svg><use href="#obs"/></svg></span>
        </span>
        <span class="tray">
            <svg class="wx"><use href="#sun"/></svg>
            <span class="temp">32°C&nbsp; Haze</span>
            <svg class="tr-ic chev" viewBox="0 0 12 8"><path d="M1 7l5-5 5 5" fill="none" stroke="#ddd"/></svg>
            <svg class="tr-ic batt" viewBox="0 0 14 10"><path d="M1 2h11v7H1z" fill="none" stroke="#ddd"/><path d="M2 3h6v5H2z" fill="#ddd"/></svg>
            <svg class="tr-ic vol" viewBox="0 0 14 12"><path d="M1 4h2l3-3v10L3 8H1z" fill="none" stroke="#ddd"/><path d="M8 4q2 2 0 4M10 2q3 4 0 8" fill="none" stroke="#ddd"/></svg>
            <span class="eng">ENG</span>
            <span class="clock">01:41 PM<br>13-10-2021</span>
            <svg class="tr-ic note" viewBox="0 0 16 16"><path d="M1 2h14v10H9l-2 2v-2H1z" fill="none" stroke="#ddd"/></svg>
        </span>
    </div>
</body>
</html>
```
FILE: styles.css
```css
* {
    margin: 0;
    padding: 0;
    box-sizing: border-box;
}

body {
    width: 1280px;
    height: 720px;
    overflow: hidden;
    display: flex;
    flex-direction: column;
    background: #f0f0f0;
    font-family: 'Liberation Sans', sans-serif;
    font-size: 10px;
    color: #333;
}

i, u, s, em, a {
    font-style: normal;
    text-decoration: none;
}

.defs {
    width: 0;
    height: 0;
    position: absolute;
}

/* title */
.titlebar {
    height: 20px;
    flex: none;
    display: flex;
    align-items: center;
    background: #6a5211;
    border-bottom: 1px solid #c9bb7e;
    color: #d9d2b8;
    font-size: 10.7px;
}

.ti-logo {
    width: 14px;
    height: 14px;
    margin: 0 5px 0 2px;
}

.winbtns {
    margin-left: auto;
    display: flex;
    padding-right: 1px;
}

.wb {
    width: 39px;
    height: 19px;
    display: flex;
    align-items: center;
    justify-content: center;
}

.wb svg {
    width: 9px;
    height: 9px;
}

.menubar {
    height: 16px;
    flex: none;
    display: flex;
    gap: 8.7px;
    align-items: center;
    padding-left: 8px;
    background: #f3f3f3;
    font-size: 10px;
    color: #222;
}

/* toolbars */
.tbar {
    flex: none;
    display: flex;
    align-items: center;
    background: linear-gradient(#f7f7f7, #eeeeee);
    border-bottom: 1px solid #c6c6c6;
}

.r1 { height: 25px; padding-left: 11px; }
.r2 { height: 26px; padding-left: 10px; }
.r3 { height: 36px; padding-left: 10px; }
.r4 { height: 27px; padding: 0 0 1px 9px; border-bottom: 0; }

.b {
    width: 22px;
    height: 22px;
    flex: none;
    display: flex;
    align-items: center;
    justify-content: center;
}

.b svg {
    width: 16px;
    height: 16px;
}

.b.on {
    background: #dcdcdc;
    border: 1px solid #b4b4b4;
    border-radius: 2px;
}

.dis {
    opacity: 0.35;
    filter: grayscale(1);
}

.dd {
    width: 8px;
    flex: none;
    display: flex;
    justify-content: center;
}

.dd::after {
    content: '';
    border-top: 3px solid #444;
    border-left: 3px solid transparent;
    border-right: 3px solid transparent;
}

.s1 { width: 1px; flex: none; }
.s2 { width: 2px; flex: none; }
.s4 { width: 4px; flex: none; }
.s6 { width: 6px; flex: none; }
.s7 { width: 7px; flex: none; }
.s8 { width: 8px; flex: none; }
.s9 { width: 9px; flex: none; }
.s11 { width: 11px; flex: none; }
.s12 { width: 12px; flex: none; }
.s13 { width: 13px; flex: none; }
.s15 { width: 15px; flex: none; }
.s16 { width: 16px; flex: none; }
.s22 { width: 22px; flex: none; }
.s27 { width: 27px; flex: none; }

.mr1 { margin-right: 1px; }
.mr2 { margin-right: 2px; }

.w8 { width: 8px; }
.w10 { width: 10px; }
.w18 { width: 18px; }
.w20 { width: 20px; }
.w21 { width: 21px; }
.w26 { width: 26px; }
.w32 { width: 32px; }
.w38 { width: 38px; }
.w40 { width: 40px; }
.w43 { width: 43px; }
.w45 { width: 45px; }
.w47 { width: 47px; }
.w51 { width: 51px; }
.w58 { width: 58px; }
.w59 { width: 59px; }
.w61 { width: 61px; }
.w65 { width: 65px; }
.w67 { width: 67px; }

.sigma {
    font-size: 17px;
    font-weight: bold;
    color: #8a1a8f;
}

.wkt {
    font-size: 11px;
    font-weight: bold;
    color: #222;
}

.wkt sub {
    font-size: 8px;
    color: #a02a2a;
}

.ttx {
    color: #999;
    font-size: 9px;
}

.field {
    height: 17px;
    flex: none;
    position: relative;
    display: flex;
    align-items: center;
    padding-left: 3px;
    background: #fff;
    border: 1px solid #c4c4c4;
    border-radius: 2px;
    font-size: 9px;
    color: #444;
}

.field.off {
    background: #f0f0f0;
    color: #888;
}

.spin,
.arrow {
    position: absolute;
    right: 5px;
    top: 50%;
}

.spin {
    width: 6px;
    height: 9px;
    margin-top: -4.5px;
    background:
        linear-gradient(45deg, transparent 50%, #666 50%) 0 0 / 3px 3px no-repeat,
        linear-gradient(-45deg, transparent 50%, #666 50%) 3px 0 / 3px 3px no-repeat,
        linear-gradient(135deg, transparent 50%, #666 50%) 0 6px / 3px 3px no-repeat,
        linear-gradient(-135deg, transparent 50%, #666 50%) 3px 6px / 3px 3px no-repeat;
}

.arrow {
    margin-top: -1.5px;
    border-top: 4px solid #444;
    border-left: 3px solid transparent;
    border-right: 3px solid transparent;
}

.arrow.small {
    right: 2px;
    border-top-color: #999;
}

.lbl {
    flex: none;
    font-size: 9.5px;
    color: #555;
}

.tag {
    width: 16px;
    height: 16px;
    display: flex;
    align-items: center;
    justify-content: center;
    font-size: 8px;
    font-weight: bold;
}

.pink { background: #f7b5c8; color: #b02a50; }
.pale { background: #e2e2e2; color: #d0d0d0; }
.mid { background: #bbbbbb; color: #d6d6d6; }
.dark { background: #8d8d8d; color: #ececec; }

.chip {
    height: 15px;
    flex: none;
    display: flex;
    align-items: center;
    padding-left: 4px;
    background: #5e5e5e;
    color: #d2d2d2;
    font-size: 9px;
}

.chip s {
    width: 4px;
    height: 4px;
    margin-right: auto;
    border-radius: 50%;
    background: #a8a8a8;
}

.chip::after {
    content: '';
    margin-left: auto;
}

.tagw {
    height: 15px;
    flex: none;
    overflow: hidden;
    background: #5e5e5e;
    color: #f0f0f0;
    font-size: 9px;
    font-weight: bold;
    line-height: 15px;
    text-align: center;
}

.more {
    width: 16px;
    flex: none;
    text-align: center;
    font-size: 11px;
    font-weight: bold;
    line-height: 12px;
    color: #333;
}

.more::after {
    content: '»';
}

.more.narrow {
    width: 12px;
}

.burger {
    width: 9px;
    height: 7px;
    margin-right: 2px;
    flex: none;
    border-top: 2px solid #444;
    border-bottom: 2px solid #444;
    background: linear-gradient(#444, #444) center / 100% 1px no-repeat;
}

/* main area */
.main {
    flex: 1;
    min-height: 0;
    display: flex;
    gap: 5px;
}

.side {
    width: 224px;
    flex: none;
    display: flex;
    flex-direction: column;
    gap: 5px;
}

.dock {
    display: flex;
    flex-direction: column;
}

.browser {
    height: 240px;
}

.layers {
    flex: 1;
    min-height: 0;
}

.dock-head {
    height: 14px;
    flex: none;
    display: flex;
    align-items: center;
    justify-content: space-between;
    padding: 0 1px 0 3px;
    font-size: 10px;
    color: #444;
}

.dock-btns {
    display: flex;
    gap: 1px;
}

.dock-btns i {
    width: 8px;
    height: 8px;
    background: #bcc4c4;
    border: 1px solid #777;
}

.dock-tools {
    height: 19px;
    flex: none;
    display: flex;
    align-items: center;
    gap: 4.5px;
    padding: 0 0 3px 5px;
}

.dock-tools svg {
    width: 12px;
    height: 12px;
}

.dock-tools .dd {
    margin: 0 -1px 0 1.500px;
}

.tree {
    flex: 1;
    min-height: 0;
    display: flex;
    background: #fff;
    border: 1px solid #c8c8c8;
}

.rows {
    flex: 1;
    padding-top: 0.5px;
}

.row {
    height: 14.7px;
    display: flex;
    align-items: center;
    font-size: 10px;
    color: #333;
}

.row a {
    width: 18px;
    flex: none;
    padding-left: 6px;
}

.row a.tw::after {
    content: '';
    display: block;
    border-left: 4px solid #444;
    border-top: 3px solid transparent;
    border-bottom: 3px solid transparent;
}

.row svg {
    width: 14px;
    height: 14px;
    margin-right: 3.5px;
    flex: none;
}

.vscroll {
    width: 12px;
    flex: none;
    display: flex;
    flex-direction: column;
    align-items: center;
    background: #f4f4f4;
    border-left: 1px solid #e2e2e2;
}

.vscroll .up {
    margin: 3px 0 auto;
    border-bottom: 4px solid #444;
    border-left: 3px solid transparent;
    border-right: 3px solid transparent;
}

.vscroll .thumb {
    width: 100%;
    height: 76px;
    background: #d2d2d2;
}

.vscroll .down {
    margin: 3px 0;
    border-top: 4px solid #444;
    border-left: 3px solid transparent;
    border-right: 3px solid transparent;
}

.layer-tree {
    flex: 1;
    background: #fff;
    border: 1px solid #c8c8c8;
    padding-top: 0.5px;
}

.lrow {
    height: 14.6px;
    position: relative;
    display: flex;
    align-items: center;
    padding-left: 18px;
    font-size: 10px;
}

.lrow.strong {
    font-weight: 700;
    color: #111;
}

.lrow.off {
    font-weight: 700;
    font-style: italic;
    color: #777;
}

.lrow.sel {
    background: #0f86d2;
    font-weight: 700;
    font-style: italic;
    color: #e4f2ff;
    text-decoration: underline;
}

.ck {
    width: 11px;
    height: 11px;
    flex: none;
    position: relative;
    background: #fff;
    border: 1px solid #d0d0d0;
}

.ck.on::after {
    content: '';
    position: absolute;
    left: 3px;
    top: 0;
    width: 4px;
    height: 8px;
    border-right: 1.5px solid #111;
    border-bottom: 1.5px solid #111;
    transform: rotate(40deg);
}

.sw {
    width: 14px;
    height: 14px;
    flex: none;
    margin: 0 3px 0 4px;
    position: relative;
}

.sw.line::after {
    content: '';
    position: absolute;
    left: 0;
    right: 0;
    top: 5px;
    height: 3px;
    background: #1c0a88;
}

.sw.poly {
    background: #e0608a;
    border: 1px solid #6b3a50;
    height: 13px;
}

.sw.dot::after {
    content: '';
    position: absolute;
    left: 4px;
    top: 3px;
    width: 7px;
    height: 7px;
    border-radius: 50%;
    background: #c2505a;
    border: 1px solid #7a4048;
}

.sw.purple {
    background: #7a72c0;
    height: 13px;
}

.memo {
    position: absolute;
    left: 206px;
    top: 3px;
    width: 10px;
    height: 7px;
    background: #eee;
    border: 1px solid #777;
    border-radius: 2px;
}

.canvas {
    flex: 1;
    min-width: 0;
    position: relative;
    margin-top: 1px;
    background: #fff;
    border-left: 1px solid #d0d0d0;
    border-top: 1px solid #d0d0d0;
}

.map {
    width: 1050px;
    height: 513px;
    display: block;
}

.pts circle {
    fill: #e05f8a;
    stroke: #6e3049;
    stroke-width: 1;
}

.ln {
    fill: none;
    stroke: #1f0a8c;
    stroke-width: 4;
}

.cur {
    fill: #fff;
    stroke: #222;
    stroke-width: 0.7;
}

.logo {
    position: absolute;
    left: 804px;
    top: 465px;
    display: flex;
    align-items: center;
    font-family: 'Inter', sans-serif;
    font-size: 40.5px;
    font-weight: 700;
    color: #0b0b0b;
    line-height: 50px;
}

.logo svg {
    width: 27px;
    height: 27px;
    margin: 2px 1px 0 0;
}

.logo-cursor {
    position: absolute;
    left: 943px;
    top: 468px;
    width: 7px;
    height: 11px;
    fill: #111;
}

/* status bar */
.status {
    height: 21px;
    flex: none;
    display: flex;
    align-items: center;
    padding-left: 3px;
    font-size: 9px;
    color: #444;
}

.locate {
    width: 154px;
    height: 16px;
    display: flex;
    align-items: center;
    gap: 5px;
    padding-left: 4px;
    background: #fff;
    border: 1px solid #ccc;
    color: #777;
}

.locate svg {
    width: 10px;
    height: 10px;
}

.st-right {
    margin-left: auto;
    display: flex;
    align-items: center;
    padding-right: 5px;
}

.st-lbl {
    margin-right: 3px;
}

.st-lbl.mag {
    margin-right: 4px;
}

.st-lbl.r {
    margin: 0 7px 0 4px;
}

.st-lbl.crs {
    margin-right: 0;
    font-size: 8.2px;
}

.sf {
    height: 16px;
    flex: none;
    position: relative;
    display: flex;
    align-items: center;
    padding-left: 3px;
    background: #fff;
    border: 1px solid #ccc;
    font-size: 8.5px;
}

.st-ic {
    width: 14px;
    height: 14px;
    flex: none;
}

.st-ic.m { margin: 0 9px 0 4px; }
.st-ic.l { margin: 0 6px 0 5px; }
.st-ic.g { margin: 0 3px 0 8px; width: 13px; height: 13px; }
.st-ic.c { margin: 0 0 0 13px; }

.st-ck {
    margin: 0 4px 0 5px;
}

/* windows taskbar */
.taskbar {
    height: 34px;
    flex: none;
    display: flex;
    align-items: center;
    background: #3a2d10;
    color: #e6e6e6;
}

.start {
    width: 40px;
    height: 100%;
    flex: none;
    display: flex;
    align-items: center;
    justify-content: center;
}

.start svg {
    width: 14px;
    height: 14px;
}

.search {
    width: 287px;
    height: 100%;
    flex: none;
    display: flex;
    align-items: center;
    gap: 8px;
    padding-left: 11px;
    background: #f3f3f3;
    font-size: 13px;
    color: #333;
}

.search svg {
    width: 14px;
    height: 14px;
}

.task-icons {
    height: 100%;
    display: flex;
}

.tk {
    width: 41.500px;
    height: 100%;
    position: relative;
    display: flex;
    align-items: center;
    justify-content: center;
}

.tk svg {
    width: 20px;
    height: 20px;
}

.tk.active {
    background: #7a6a30;
}

.tk.open::after,
.tk.active::after {
    content: '';
    position: absolute;
    left: 4px;
    right: 4px;
    bottom: 0;
    height: 2px;
    background: #f2e6c0;
}

.tk.active::after {
    left: 0;
    right: 0;
}

.cortana::before {
    content: '';
    width: 13px;
    height: 13px;
    border: 2px solid #eee;
    border-radius: 50%;
}

.tray {
    margin-left: auto;
    display: flex;
    align-items: center;
    height: 100%;
    padding-right: 18px;
}

.wx {
    width: 18px;
    height: 18px;
    margin-right: 5px;
}

.temp {
    width: 73px;
    font-size: 12.5px;
    color: #ddd;
}

.tr-ic {
    flex: none;
}

.chev { width: 12px; height: 8px; margin-right: 7px; }
.batt { width: 13px; height: 10px; margin-right: 9px; }
.vol { width: 14px; height: 12px; margin-right: 7px; }
.note { width: 16px; height: 16px; margin-left: 12px; }

.eng {
    width: 24px;
    font-size: 10px;
}

.clock {
    width: 60px;
    text-align: center;
    font-size: 10px;
    line-height: 15px;
}
```
